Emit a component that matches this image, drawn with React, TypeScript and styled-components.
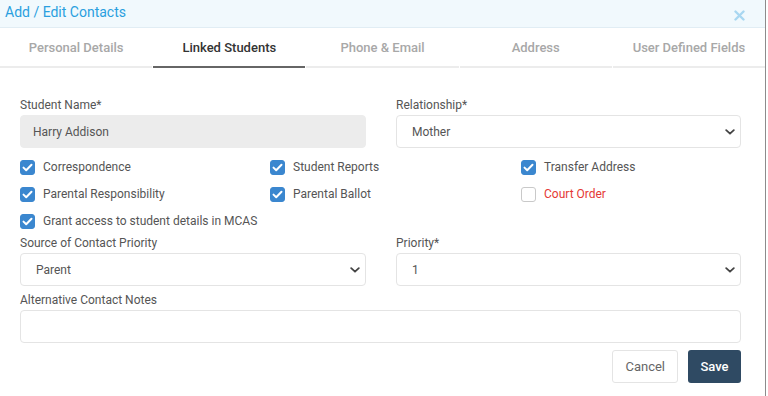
import React, { useState } from 'react';
import styled, { createGlobalStyle } from 'styled-components';

const GlobalStyle = createGlobalStyle`
  html, body {
    margin: 0;
    padding: 0;
    background: #ffffff;
    font-family: Roboto, "Liberation Sans", Arial, sans-serif;
  }
  * {
    box-sizing: border-box;
  }
`;

const tabs = [
  'Personal Details',
  'Linked Students',
  'Phone & Email',
  'Address',
  'User Defined Fields',
];

type Check = { label: string; checked: boolean; danger?: boolean };

const checks: Check[] = [
  { label: 'Correspondence', checked: true },
  { label: 'Student Reports', checked: true },
  { label: 'Transfer Address', checked: true },
  { label: 'Parental Responsibility', checked: true },
  { label: 'Parental Ballot', checked: true },
  { label: 'Court Order', checked: false, danger: true },
  { label: 'Grant access to student details in MCAS', checked: true },
];

const Chevron: React.FC = () => (
  <ChevronIcon width="10" height="6" viewBox="0 0 10 6">
    <path d="M1.2 1.2 L5 4.7 L8.8 1.2" fill="none" stroke="#444" strokeWidth="1.8" strokeLinecap="round" strokeLinejoin="round" />
  </ChevronIcon>
);

const Select: React.FC<{ value: string; options: string[] }> = ({ value, options }) => (
  <SelectWrap>
    <StyledSelect defaultValue={value}>
      {options.map((o) => (
        <option key={o}>{o}</option>
      ))}
    </StyledSelect>
    <Chevron />
  </SelectWrap>
);

const App: React.FC = () => {
  const [active, setActive] = useState(1);
  const [values, setValues] = useState(checks.map((c) => c.checked));

  return (
    <>
      <GlobalStyle />
      <Modal>
        <Header>
          <Title>Add / Edit Contacts</Title>
          <CloseBtn aria-label="close">
            <svg width="11" height="11" viewBox="0 0 11 11">
              <path d="M1.5 1.5 L9.5 9.5 M9.5 1.5 L1.5 9.5" stroke="#a9d7f1" strokeWidth="2.4" strokeLinecap="round" />
            </svg>
          </CloseBtn>
        </Header>
        <TabBar>
          {tabs.map((t, i) => (
            <Tab key={t} active={i === active} onClick={() => setActive(i)}>
              {t}
            </Tab>
          ))}
        </TabBar>
        <Body>
          <TwoCols>
            <Field>
              <Label>Student Name*</Label>
              <Input value="Harry Addison" readOnly disabled />
            </Field>
            <Field>
              <Label>Relationship*</Label>
              <Select value="Mother" options={['Mother', 'Father', 'Guardian']} />
            </Field>
          </TwoCols>
          <CheckGrid>
            {checks.map((c, i) => (
              <CheckItem key={c.label}>
                <Box
                  checked={values[i]}
                  onClick={() => setValues(values.map((v, j) => (j === i ? !v : v)))}
                >
                  {values[i] && (
                    <svg width="11" height="9" viewBox="0 0 11 9">
                      <path d="M1.5 4.6 L4.2 7.2 L9.5 1.8" fill="none" stroke="#fff" strokeWidth="2" strokeLinecap="round" strokeLinejoin="round" />
                    </svg>
                  )}
                </Box>
                <CheckLabel danger={c.danger}>{c.label}</CheckLabel>
              </CheckItem>
            ))}
          </CheckGrid>
          <PriorityRow>
            <Field>
              <Label>Source of Contact Priority</Label>
              <Select value="Parent" options={['Parent', 'School', 'Local Authority']} />
            </Field>
            <Field>
              <Label>Priority*</Label>
              <Select value="1" options={['1', '2', '3', '4']} />
            </Field>
          </PriorityRow>
          <NotesField>
            <Label>Alternative Contact Notes</Label>
            <Input />
          </NotesField>
          <Footer>
            <CancelBtn>Cancel</CancelBtn>
            <SaveBtn>Save</SaveBtn>
          </Footer>
        </Body>
      </Modal>
    </>
  );
};

const Modal = styled.div`
  width: 766px;
  height: 396px;
  background: #fff;
  border-right: 1px solid #8c8c8c;
  overflow: hidden;
`;

const Header = styled.div`
  height: 28px;
  background: #f1f9fd;
  border-bottom: 1px solid #e1edf4;
  display: flex;
  align-items: center;
  justify-content: space-between;
  padding: 0 20px 0 5px;
`;

const Title = styled.div`
  font-size: 14px;
  color: #2a9fdf;
  margin-top: -4px;
`;

const CloseBtn = styled.div`
  display: flex;
  align-items: center;
  margin-top: 3px;
  cursor: pointer;
`;

const TabBar = styled.div`
  display: flex;
  height: 40px;
  gap: 1px;
`;

const Tab = styled.div<{ active?: boolean }>`
  flex: 1;
  display: flex;
  align-items: center;
  justify-content: center;
  padding-top: 1px;
  font-size: 13px;
  font-weight: 500;
  color: ${(p) => (p.active ? '#333' : '#a8a8a8')};
  border-bottom: 2px solid ${(p) => (p.active ? '#666' : '#ececec')};
  cursor: pointer;
`;

const Body = styled.div`
  padding: 30px 24px 0 20px;
`;

const TwoCols = styled.div`
  display: grid;
  grid-template-columns: 346px 1fr;
  column-gap: 30px;
`;

const PriorityRow = styled(TwoCols)`
  margin-top: 7px;
`;

const Field = styled.div`
  display: flex;
  flex-direction: column;
`;

const NotesField = styled(Field)`
  margin-top: 7px;
`;

const Label = styled.label`
  font-size: 12px;
  line-height: 14px;
  font-weight: 400;
  color: #555;
  margin-bottom: 3px;
`;

const Input = styled.input`
  height: 33px;
  width: 100%;
  border: 1px solid #e4e4e4;
  border-radius: 4px;
  padding: 0 12px;
  font-family: inherit;
  font-size: 12px;
  color: #555;
  background: #fff;
  outline: none;

  &:disabled {
    background: #ececec;
    border-color: #ececec;
  }
`;

const SelectWrap = styled.div`
  position: relative;
`;

const StyledSelect = styled.select`
  appearance: none;
  width: 100%;
  height: 33px;
  border: 1px solid #e4e4e4;
  border-radius: 4px;
  padding: 0 15px;
  font-family: inherit;
  font-size: 12px;
  color: #555;
  background: #fff;
  outline: none;
`;

const ChevronIcon = styled.svg`
  position: absolute;
  right: 6px;
  top: 14px;
  pointer-events: none;
`;

const CheckGrid = styled.div`
  display: grid;
  grid-template-columns: 250px 251px 1fr;
  row-gap: 12px;
  margin-top: 12px;
`;

const CheckItem = styled.div`
  display: flex;
  align-items: center;
  gap: 8px;
`;

const Box = styled.div<{ checked?: boolean }>`
  width: 15px;
  height: 15px;
  border-radius: 3px;
  display: flex;
  align-items: center;
  justify-content: center;
  background: ${(p) => (p.checked ? '#3b87cf' : '#fff')};
  border: 1px solid ${(p) => (p.checked ? '#3b87cf' : '#c9c9c9')};
  cursor: pointer;
`;

const CheckLabel = styled.span<{ danger?: boolean }>`
  font-size: 12px;
  line-height: 15px;
  color: ${(p) => (p.danger ? '#e53935' : '#555')};
`;

const Footer = styled.div`
  display: flex;
  justify-content: flex-end;
  gap: 10px;
  margin-top: 7px;
`;

const CancelBtn = styled.button`
  height: 33px;
  padding: 0 12px;
  border: 1px solid #e4e4e4;
  border-radius: 3px;
  background: #fff;
  font-family: inherit;
  font-size: 13px;
  color: #666;
  cursor: pointer;
`;

const SaveBtn = styled.button`
  height: 33px;
  width: 53px;
  border: none;
  border-radius: 3px;
  background: #2f4a63;
  font-family: inherit;
  font-size: 13px;
  font-weight: 500;
  color: #fff;
  cursor: pointer;
`;

export default App;
